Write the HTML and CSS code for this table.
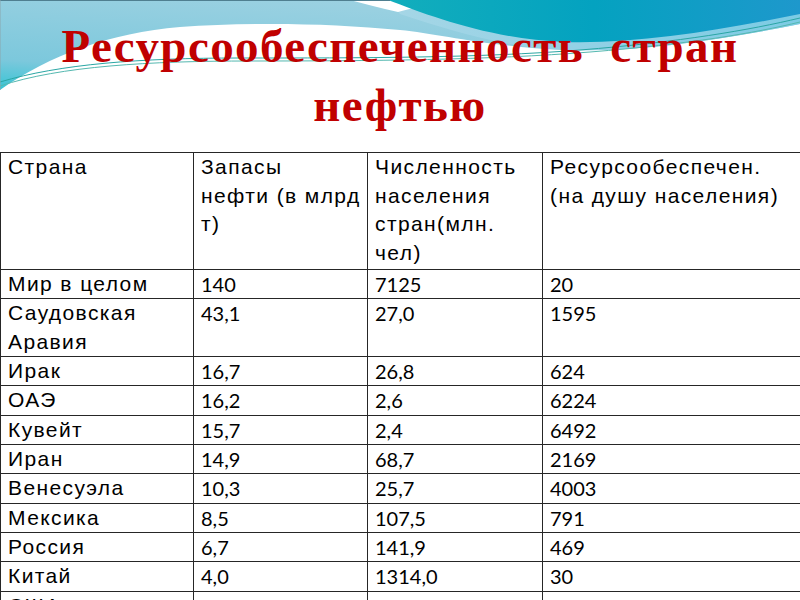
FILE: index.html
```html
<!DOCTYPE html>
<html lang="ru">
<head>
<meta charset="utf-8">
<title>Ресурсообеспеченность стран нефтью</title>
<link rel="stylesheet" href="styles.css">
</head>
<body>
<div class="slide">
  <svg class="bg" width="800" height="120" viewBox="0 0 800 120" aria-hidden="true">
    <defs>
      <linearGradient id="lb" x1="0" y1="1" x2="0.6" y2="0">
        <stop offset="0" stop-color="#36c4d4"/>
        <stop offset="0.25" stop-color="#7cc8dc"/>
        <stop offset="1" stop-color="#9fd2e2"/>
      </linearGradient>
      <linearGradient id="dt" x1="0" y1="0" x2="1" y2="0">
        <stop offset="0" stop-color="#12aebc"/>
        <stop offset="0.5" stop-color="#04a2c0"/>
        <stop offset="1" stop-color="#1e98cc"/>
      </linearGradient>
      <linearGradient id="band" x1="0" y1="0" x2="1" y2="0">
        <stop offset="0" stop-color="#a6d6e6"/>
        <stop offset="1" stop-color="#7ccbe4"/>
      </linearGradient>
    </defs>
    <path d="M0,0 L800,0 L800,24 C720,40 640,52 565,50 C490,47 440,34 400,30 C330,23 250,22 180,27 C110,33 50,55 0,90 Z" fill="url(#lb)"/>
    <path d="M390,0 L800,0 L800,24 C720,40 640,52 565,50 C500,47 450,30 400,14 Z" fill="url(#band)"/>
    <path d="M350,0 L440,0 C425,5 410,9 398,12 C380,8 365,4 350,0 Z" fill="#ffffff"/>
    <path d="M388,0 L800,0 L800,14 C720,30 640,44 565,42 C490,39 430,16 388,0 Z" fill="url(#dt)"/>
    <path d="M0,82 C60,64 140,58 240,58 C360,58 480,58 580,50 C680,42 750,30 800,18" fill="none" stroke="#2aa6a4" stroke-width="1"/>
    <path d="M0,86 C60,66 150,61 250,61 C370,61 490,60 590,52 C690,44 755,33 800,22" fill="none" stroke="#54b8b0" stroke-width="1"/>
    <path d="M0,0 L390,0" stroke="#4f7f90" stroke-width="2"/>
    <path d="M0,0 L0,90" stroke="#8aa8b0" stroke-width="1"/>
  </svg>

  <h1 class="title">Ресурсообеспеченность&nbsp; стран<br>нефтью</h1>

  <table class="data">
    <colgroup>
      <col class="c1"><col class="c2"><col class="c3"><col class="c4">
    </colgroup>
    <thead>
      <tr>
        <th>Страна</th>
        <th>Запасы<br>нефти (в млрд<br>т)</th>
        <th>Численность<br>населения<br>стран(млн.<br>чел)</th>
        <th>Ресурсообеспечен.<br>(на душу населения)</th>
      </tr>
    </thead>
    <tbody>
      <tr><td>Мир в целом</td><td class="n">140</td><td class="n">7125</td><td class="n">20</td></tr>
      <tr><td>Саудовская<br>Аравия</td><td class="n">43,1</td><td class="n">27,0</td><td class="n">1595</td></tr>
      <tr><td>Ирак</td><td class="n">16,7</td><td class="n">26,8</td><td class="n">624</td></tr>
      <tr><td>ОАЭ</td><td class="n">16,2</td><td class="n">2,6</td><td class="n">6224</td></tr>
      <tr><td>Кувейт</td><td class="n">15,7</td><td class="n">2,4</td><td class="n">6492</td></tr>
      <tr><td>Иран</td><td class="n">14,9</td><td class="n">68,7</td><td class="n">2169</td></tr>
      <tr><td>Венесуэла</td><td class="n">10,3</td><td class="n">25,7</td><td class="n">4003</td></tr>
      <tr><td>Мексика</td><td class="n">8,5</td><td class="n">107,5</td><td class="n">791</td></tr>
      <tr><td>Россия</td><td class="n">6,7</td><td class="n">141,9</td><td class="n">469</td></tr>
      <tr><td>Китай</td><td class="n">4,0</td><td class="n">1314,0</td><td class="n">30</td></tr>
      <tr><td>США</td><td class="n"></td><td class="n"></td><td class="n"></td></tr>
    </tbody>
  </table>
</div>
</body>
</html>
```

FILE: styles.css
```css
html, body {
  margin: 0;
  padding: 0;
  background: #ffffff;
}

.slide {
  position: relative;
  width: 800px;
  height: 600px;
  overflow: hidden;
  background: #ffffff;
}

.bg {
  position: absolute;
  left: 0;
  top: 0;
  z-index: 0;
}

.title {
  position: relative;
  z-index: 1;
  margin: 0;
  padding-top: 17px;
  text-align: center;
  font-family: "Liberation Serif", "Times New Roman", serif;
  font-weight: bold;
  font-size: 47px;
  line-height: 59px;
  letter-spacing: 1.4px;
  color: #c00000;
  white-space: nowrap;
}

.data {
  position: relative;
  z-index: 1;
  margin-top: 17px;
  border-collapse: collapse;
  table-layout: fixed;
  width: 1000px;
  font-family: "Liberation Sans", Arial, sans-serif;
  font-size: 21px;
  letter-spacing: 1.4px;
  color: #000000;
}

.c1 { width: 193px; }
.c2 { width: 174px; }
.c3 { width: 175px; }
.c4 { width: 458px; }

.data th,
.data td {
  border: 1px solid #262626;
  padding: 0 6px 0 7px;
  vertical-align: top;
  text-align: left;
  font-weight: normal;
  white-space: nowrap;
  line-height: 28.33px;
}

.data th {
  line-height: 28.6px;
  padding-bottom: 1.6px;
}

.data td.n {
  font-family: Lato, "Liberation Sans", sans-serif;
  font-size: 20px;
  letter-spacing: 0;
}
```
